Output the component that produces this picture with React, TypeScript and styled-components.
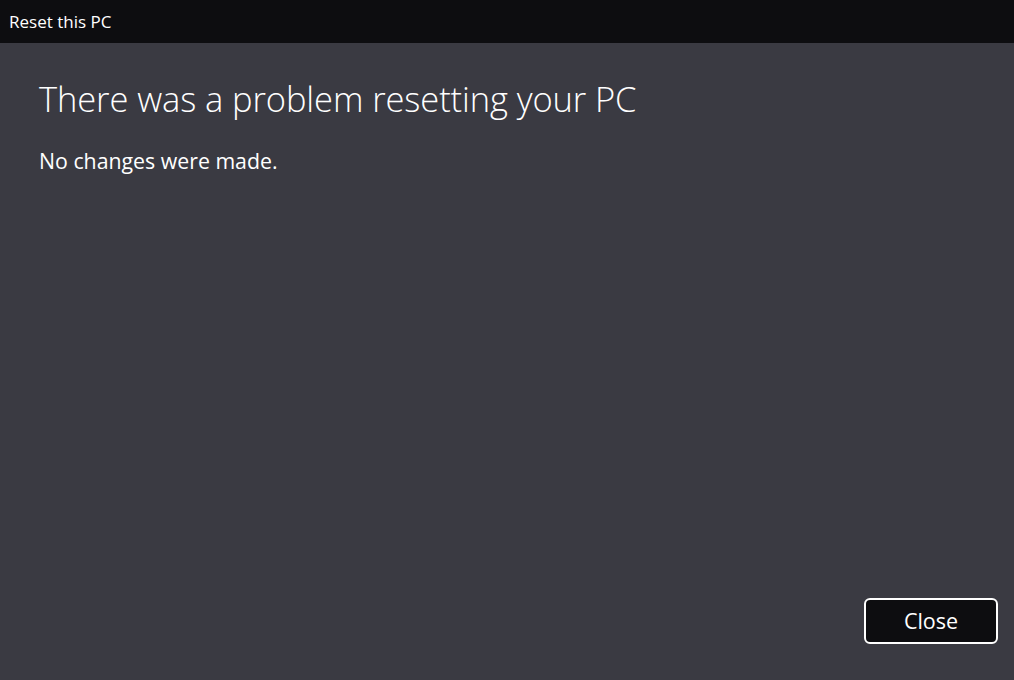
import styled, { createGlobalStyle } from 'styled-components';

const Global = createGlobalStyle`
    html, body {
        margin: 0;
        padding: 0;
        background: #3a3a42;
    }
    * {
        box-sizing: border-box;
    }
`;

const Window = styled.div`
    width: 1014px;
    height: 680px;
    display: flex;
    flex-direction: column;
    background-color: #3a3a42;
    font-family: 'Segoe UI', 'Open Sans', 'Noto Sans', sans-serif;
    color: #ffffff;
`;

const TitleBar = styled.div`
    height: 43px;
    flex-shrink: 0;
    display: flex;
    align-items: center;
    padding: 0 9px;
    background-color: #0d0d10;
    font-size: 17px;
    line-height: 22px;
`;

const Content = styled.div`
    flex: 1;
    display: flex;
    flex-direction: column;
    padding: 34px 16px 36px 39px;
`;

const Heading = styled.h1`
    margin: 0;
    font-weight: 300;
    font-size: 34.5px;
    line-height: 44px;
    letter-spacing: -0.1px;
`;

const Message = styled.p`
    margin: 27px 0 0;
    font-weight: 400;
    font-size: 21.3px;
    line-height: 26px;
`;

const Footer = styled.div`
    margin-top: auto;
    display: flex;
    justify-content: flex-end;
`;

const Button = styled.button`
    width: 134px;
    height: 46px;
    border: 2px solid #ffffff;
    border-radius: 6px;
    background-color: #0d0d10;
    color: #ffffff;
    font-family: inherit;
    font-size: 21.5px;
    line-height: 26px;
    cursor: pointer;
`;

const App = () => {
    return (
        <>
            <Global />
            <Window>
                <TitleBar>Reset this PC</TitleBar>
                <Content>
                    <Heading>There was a problem resetting your PC</Heading>
                    <Message>No changes were made.</Message>
                    <Footer>
                        <Button>Close</Button>
                    </Footer>
                </Content>
            </Window>
        </>
    );
};

export default App;
